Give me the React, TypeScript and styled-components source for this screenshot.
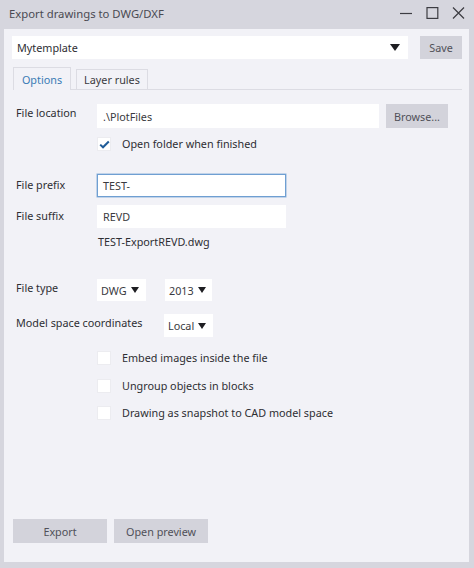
import React from 'react';
import { createGlobalStyle, styled } from 'styled-components';

const GlobalStyle = createGlobalStyle`
  html, body {
    margin: 0;
    padding: 0;
    background: #d6d6de;
  }
  body {
    font-family: "Noto Sans", "Open Sans", sans-serif;
    font-size: 10.8px;
    color: #2e2e33;
  }
`;

const Window = styled.div`
  width: 474px;
  height: 568px;
  display: flex;
  flex-direction: column;
  background: #d6d6de;
  box-sizing: border-box;
`;

const TitleBar = styled.div`
  height: 29px;
  display: flex;
  align-items: center;
  padding: 0 9px;
  flex-shrink: 0;
`;

const Title = styled.div`
  flex: 1;
  font-size: 11.3px;
  color: #4a4a52;
  padding-bottom: 3px;
`;

const WinControls = styled.div`
  display: flex;
  align-items: center;
  gap: 13px;
  padding-bottom: 3px;
  svg {
    display: block;
  }
`;

const Panel = styled.div`
  flex: 1;
  margin: 0 5px 6px 4px;
  background: #f2f2f7;
  padding: 7px 7px 19px 8px;
  display: flex;
  flex-direction: column;
  box-sizing: border-box;
`;

const TopBar = styled.div`
  display: flex;
  gap: 12px;
  height: 23px;
`;

const Combo = styled.div`
  flex: 1;
  background: #fff;
  display: flex;
  align-items: center;
  padding: 0 8px 0 5px;
`;

const ComboValue = styled.span`
  flex: 1;
`;

const Caret = styled.span<{ $size?: number }>`
  width: 0;
  height: 0;
  border-left: ${(p) => (p.$size ?? 10) / 2}px solid transparent;
  border-right: ${(p) => (p.$size ?? 10) / 2}px solid transparent;
  border-top: ${(p) => ((p.$size ?? 10) * 0.7).toFixed(1)}px solid #1e1e22;
  display: inline-block;
`;

const GreyButton = styled.button<{ $w: number }>`
  width: ${(p) => p.$w}px;
  height: 100%;
  border: none;
  background: #d3d3db;
  color: #505058;
  font-family: inherit;
  font-size: 10.8px;
  padding: 0;
  flex-shrink: 0;
`;

const TabStrip = styled.div`
  margin: 8px 0 0 1px;
  display: flex;
  align-items: flex-end;
  gap: 5px;
  border-bottom: 1px solid #dcdce3;
  height: 22px;
`;

const Tab = styled.div<{ $active?: boolean; $w: number }>`
  width: ${(p) => p.$w}px;
  height: ${(p) => (p.$active ? 23 : 20)}px;
  display: flex;
  align-items: center;
  justify-content: center;
  box-sizing: border-box;
  border: 1px solid #dcdce3;
  border-bottom: none;
  margin-bottom: ${(p) => (p.$active ? -1 : 0)}px;
  background: #f2f2f7;
  color: ${(p) => (p.$active ? '#3a7bb5' : '#3a3a40')};
`;

const Form = styled.div`
  padding-left: 4px;
  display: flex;
  flex-direction: column;
  flex: 1;
`;

const Row = styled.div<{ $top: number; $h: number }>`
  display: flex;
  align-items: flex-start;
  margin-top: ${(p) => p.$top}px;
  height: ${(p) => p.$h}px;
`;

const Label = styled.div<{ $w?: number; $pt?: number }>`
  width: ${(p) => p.$w ?? 81}px;
  flex-shrink: 0;
  padding-top: ${(p) => p.$pt ?? 1}px;
  line-height: 16px;
`;

const TextBox = styled.div<{ $w?: number; $focus?: boolean }>`
  ${(p) => (p.$w ? `width: ${p.$w}px;` : 'flex: 1;')}
  height: 100%;
  box-sizing: border-box;
  background: #fff;
  border: 1px solid ${(p) => (p.$focus ? '#6f9fd2' : '#fff')};
  ${(p) => (p.$focus ? 'box-shadow: 0 0 0 0.5px #8fb4dc;' : '')}
  display: flex;
  align-items: center;
  padding-left: 5px;
  color: #3a3a40;
`;

const BrowseSlot = styled.div`
  margin: 0 14px 0 7px;
  height: 100%;
  display: flex;
`;

const Indent = styled.div`
  margin-left: 81px;
  height: 100%;
  display: flex;
  align-items: center;
`;

const Box = styled.div`
  width: 14px;
  height: 14px;
  background: #fff;
  border: 1px solid #ececf0;
  box-sizing: border-box;
  display: flex;
  align-items: center;
  justify-content: center;
  flex-shrink: 0;
`;

const CheckText = styled.span`
  margin-left: 11px;
  line-height: 16px;
`;

const Preview = styled.div`
  margin: 6px 0 0 82px;
  height: 16px;
  line-height: 16px;
`;

const Select = styled.div<{ $w: number; $ml?: number }>`
  width: ${(p) => p.$w}px;
  height: 100%;
  margin-left: ${(p) => p.$ml ?? 0}px;
  background: #fff;
  display: flex;
  align-items: center;
  gap: 4px;
  padding-left: 4px;
  box-sizing: border-box;
  color: #3a3a40;
  flex-shrink: 0;
`;

const Actions = styled.div`
  margin: auto 0 0 -3px;
  display: flex;
  gap: 7px;
  height: 24px;
`;

const CheckRow = ({ top, checked, label }: { top: number; checked?: boolean; label: string }) => (
  <Row $top={top} $h={16}>
    <Indent>
      <Box>
        {checked && (
          <svg width="11" height="9" viewBox="0 0 11 9">
            <path d="M1.2 4.6 L4 7.3 L9.8 1.5" fill="none" stroke="#1f5c99" strokeWidth="2" />
          </svg>
        )}
      </Box>
      <CheckText>{label}</CheckText>
    </Indent>
  </Row>
);

export default function App() {
  return (
    <Window>
      <GlobalStyle />
      <TitleBar>
        <Title>Export drawings to DWG/DXF</Title>
        <WinControls>
          <svg width="13" height="12" viewBox="0 0 13 12">
            <path d="M0 6.5 H12" stroke="#3c3c42" strokeWidth="1.2" />
          </svg>
          <svg width="13" height="12" viewBox="0 0 13 12">
            <rect x="1" y="0.6" width="10.8" height="10.8" fill="none" stroke="#3c3c42" strokeWidth="1.2" />
          </svg>
          <svg width="13" height="12" viewBox="0 0 13 12">
            <path d="M1 0.5 L12 11.5 M12 0.5 L1 11.5" stroke="#3c3c42" strokeWidth="1.2" />
          </svg>
        </WinControls>
      </TitleBar>

      <Panel>
        <TopBar>
          <Combo>
            <ComboValue>Mytemplate</ComboValue>
            <Caret $size={10} />
          </Combo>
          <GreyButton $w={42}>Save</GreyButton>
        </TopBar>

        <TabStrip>
          <Tab $active $w={58}>Options</Tab>
          <Tab $w={72}>Layer rules</Tab>
        </TabStrip>

        <Form>
          <Row $top={14} $h={24}>
            <Label>File location</Label>
            <TextBox>.\PlotFiles</TextBox>
            <BrowseSlot>
              <GreyButton $w={62}>Browse...</GreyButton>
            </BrowseSlot>
          </Row>

          <CheckRow top={8} checked label="Open folder when finished" />

          <Row $top={22} $h={23}>
            <Label $pt={3}>File prefix</Label>
            <TextBox $w={189} $focus>TEST-</TextBox>
          </Row>
          <Row $top={8} $h={23}>
            <Label $pt={3}>File suffix</Label>
            <TextBox $w={189}>REVD</TextBox>
          </Row>

          <Preview>TEST-ExportREVD.dwg</Preview>

          <Row $top={29} $h={22}>
            <Label>File type</Label>
            <Select $w={49}>
              DWG <Caret $size={9} />
            </Select>
            <Select $w={47} $ml={19}>
              2013 <Caret $size={9} />
            </Select>
          </Row>

          <Row $top={13} $h={23}>
            <Label $w={148}>Model space coordinates</Label>
            <Select $w={49}>
              Local <Caret $size={9} />
            </Select>
          </Row>

          <CheckRow top={13} label="Embed images inside the file" />
          <CheckRow top={12} label="Ungroup objects in blocks" />
          <CheckRow top={11} label="Drawing as snapshot to CAD model space" />

          <Actions>
            <GreyButton $w={94}>Export</GreyButton>
            <GreyButton $w={94}>Open preview</GreyButton>
          </Actions>
        </Form>
      </Panel>
    </Window>
  );
}
